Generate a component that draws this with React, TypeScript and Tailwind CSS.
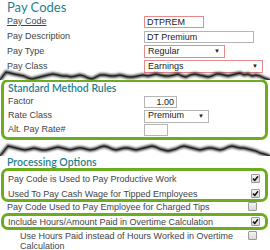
import React from "react"

const teal = "text-[#1f7f8e]"

// torn paper edge between the screen parts
function TornEdge({ points }: { points: string }) {
  return (
    <svg width="270" height="16" viewBox="0 0 270 16" className="block relative z-10">
      <defs>
        <filter id="blur" x="-5%" y="-50%" width="110%" height="200%">
          <feGaussianBlur stdDeviation="0.9" />
        </filter>
      </defs>
      <polygon points={`0,16 ${points} 270,16`} fill="#ffffff" />
      <polyline points={points} fill="none" stroke="#3a3a3a" strokeWidth="3.4" filter="url(#blur)" />
      <polyline points={points} fill="none" stroke="#1a1a1a" strokeWidth="1" />
    </svg>
  )
}

const edge1 =
  "0,16 6,8 10,9 14,10 19,11 24,12 28,14 32,15 36,14 40,13 44,12 48,11 53,10 58,11 62,12 67,12 71,13 76,12 80,11 84,12 88,14 92,15 96,13 100,11 105,11 110,12 115,12 120,11 124,12 128,13 133,13 138,12 143,11 148,12 152,11 156,10 160,11 165,12 169,12 174,11 178,10 182,12 186,13 190,11 195,10 199,11 204,12 208,13 212,12 216,10 220,10 224,11 228,12 232,11 236,10 240,9 244,11 248,10 252,12 256,11 260,12 264,14 270,16"

const edge2 =
  "0,16 8,6 12,7 16,8 20,9 25,10 30,9 34,8 38,9 42,10 46,10 50,9 54,8 58,7 62,8 66,9 70,10 74,9 78,8 82,8 86,9 90,10 95,9 100,7 104,6 108,7 112,9 116,10 120,9 124,8 128,8 132,9 136,10 140,9 144,8 148,7 152,6 156,7 160,9 164,10 168,11 172,10 176,9 180,7 184,6 188,7 192,8 196,9 200,10 204,9 208,8 212,8 216,9 220,10 224,9 228,7 232,6 236,7 240,8 244,8 248,9 252,10 256,11 260,13 264,14 270,16"

function Row({ label, underline, children }: { label: string; underline?: boolean; children: React.ReactNode }) {
  return (
    <div className="flex items-center h-[15px]">
      <div className={`w-[137px] text-[9px] text-[#444] ${underline ? "underline" : ""}`}>{label}</div>
      {children}
    </div>
  )
}

function Input({ value, w, red, right }: { value?: string; w: string; red?: boolean; right?: boolean }) {
  return (
    <div
      className={`${w} h-[12px] border bg-white text-[9px] leading-[10px] px-[2px] text-[#222] ${
        red ? "border-[#e88a8a]" : "border-[#b5b5b5]"
      } ${right ? "text-right" : ""}`}
    >
      {value}
    </div>
  )
}

function Select({ value, w, red }: { value: string; w: string; red?: boolean }) {
  return (
    <div
      className={`${w} h-[13px] border bg-white flex items-center justify-between pl-[3px] pr-[4px] text-[9px] text-[#222] ${
        red ? "border-[#e88a8a]" : "border-[#b5b5b5]"
      }`}
    >
      <span>{value}</span>
      <span className="text-[6px]">▼</span>
    </div>
  )
}

function Check({ on }: { on?: boolean }) {
  return (
    <div className="w-[9px] h-[9px] border border-[#9a9a9a] rounded-[1px] bg-gradient-to-b from-[#f4f4f4] to-[#d8d8d8] flex items-center justify-center">
      {on && (
        <svg width="7" height="7" viewBox="0 0 7 7">
          <path d="M1 3.6 L2.8 5.4 L6 1.2" fill="none" stroke="#111" strokeWidth="1.5" />
        </svg>
      )}
    </div>
  )
}

function OptRow({ label, on, indent }: { label: React.ReactNode; on?: boolean; indent?: boolean }) {
  return (
    <div className="flex items-start justify-between pr-[5px]">
      <div className={`text-[9px] leading-[10px] text-[#444] ${indent ? "pl-[13px]" : ""}`}>{label}</div>
      <Check on={on} />
    </div>
  )
}

export default function App() {
  return (
    <div className="w-[270px] h-[250px] bg-white overflow-hidden font-['Liberation_Sans',Arial,sans-serif]">
      {/* Pay Codes */}
      <div className="h-[74px] overflow-hidden px-[7px]">
        <div className={`font-['Lato',sans-serif] text-[13px] leading-[14px] ${teal}`}>Pay Codes</div>
        <Row label="Pay Code" underline>
          <Input value="DTPREM" w="w-[60px]" red />
        </Row>
        <Row label="Pay Description">
          <Input value="DT Premium" w="w-[110px]" />
        </Row>
        <Row label="Pay Type">
          <Select value="Regular" w="w-[81px]" red />
        </Row>
        <Row label="Pay Class">
          <Select value="Earnings" w="w-[119px]" red />
        </Row>
      </div>
      <div className="-mt-[10px]">
        <TornEdge points={edge1} />
      </div>

      {/* Standard Method Rules */}
      <div className="ml-[1px] mr-[2px] -mt-[1px] h-[61px] border-[3px] border-[#6cad1f] rounded-[7px] px-[4px]">
        <div className={`font-['Lato',sans-serif] font-semibold text-[10.5px] leading-[13px] ${teal}`}>
          Standard Method Rules
        </div>
        <div className="flex items-center h-[14px]">
          <div className="w-[136px] text-[9px] text-[#444]">Factor</div>
          <Input value="1.00" w="w-[33px]" right />
        </div>
        <div className="flex items-center h-[14px]">
          <div className="w-[136px] text-[9px] text-[#444]">Rate Class</div>
          <Select value="Premium" w="w-[65px]" />
        </div>
        <div className="flex items-center h-[14px]">
          <div className="w-[136px] text-[9px] text-[#444]">Alt. Pay Rate#</div>
          <Input w="w-[24px]" />
        </div>
      </div>
      <TornEdge points={edge2} />

      {/* Processing Options */}
      <div className={`px-[7px] font-['Lato',sans-serif] font-semibold text-[10.5px] leading-[12px] ${teal}`}>
        Processing Options
      </div>
      <div className="ml-[1px] mr-[2px] h-[34px] border-[3px] border-[#6cad1f] rounded-[7px] pl-[4px] pt-[3px] flex flex-col gap-[5px]">
        <OptRow label="Pay Code is Used to Pay Productive Work" on />
        <OptRow label="Used To Pay Cash Wage for Tipped Employees" on />
      </div>
      <div className="pl-[7px] pr-[8px] h-[11px]">
        <OptRow label="Pay Code Used to Pay Employee for Charged Tips" />
      </div>
      <div className="ml-[1px] mr-[2px] h-[17px] border-[3px] border-[#6cad1f] rounded-[7px] pl-[4px] pt-[1px]">
        <OptRow label="Include Hours/Amount Paid in Overtime Calculation" on />
      </div>
      <div className="pl-[7px] pr-[8px] pt-[1px]">
        <OptRow
          indent
          label={
            <>
              Use Hours Paid instead of Hours Worked in Overtime
              <br />
              Calculation
            </>
          }
        />
      </div>
    </div>
  )
}
